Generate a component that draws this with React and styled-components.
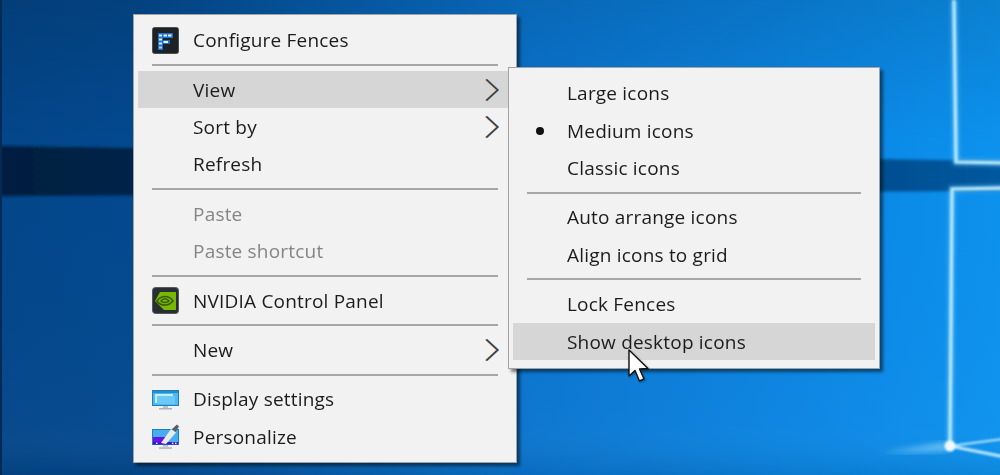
import React from 'react';
import styled, { createGlobalStyle } from 'styled-components';

const GlobalStyle = createGlobalStyle`
  html, body {
    margin: 0;
    padding: 0;
    width: 1000px;
    height: 475px;
    overflow: hidden;
    background: #0568b8;
  }
`;

const Desktop = styled.div`
  position: relative;
  width: 1000px;
  height: 475px;
  overflow: hidden;
  font-family: 'Open Sans', 'Noto Sans', sans-serif;
  filter: blur(0.35px);
`;

const Wallpaper = styled.svg`
  position: absolute;
  inset: 0;
  display: block;
`;

const Menu = styled.div`
  position: absolute;
  box-sizing: border-box;
  padding-top: 6.5px;
  background: #f2f2f2;
  border: 1px solid #a3a3a3;
  box-shadow: 3px 3px 3px rgba(0, 0, 0, 0.5);
  display: flex;
  flex-direction: column;
`;

const MainMenu = styled(Menu)`
  left: 133px;
  top: 14px;
  width: 384px;
  height: 449px;
`;

const SubMenu = styled(Menu)`
  left: 508px;
  top: 67px;
  width: 372px;
  height: 302px;
`;

const Row = styled.div`
  display: flex;
  align-items: center;
  height: 37.4px;
  flex: none;
  margin: 0 4px;
  padding-right: 13px;
  font-size: 19px;
  letter-spacing: 0.2px;
  color: ${props => (props.$disabled ? '#858585' : '#1c1c1c')};
  background: ${props => (props.$active ? '#d6d6d6' : 'transparent')};
`;

const IconSlot = styled.span`
  flex: none;
  width: 55px;
  box-sizing: border-box;
  padding-left: 14px;
  display: flex;
  align-items: center;
`;

const CheckSlot = styled.span`
  flex: none;
  width: 54px;
  box-sizing: border-box;
  padding-left: 23px;
  display: flex;
  align-items: center;
`;

const Bullet = styled.span`
  width: 8px;
  height: 8px;
  border-radius: 50%;
  background: #111;
`;

const Label = styled.span`
  flex: 1;
  white-space: nowrap;
`;

const Separator = styled.div`
  flex: none;
  height: 2px;
  margin: 5px 18px;
  background: #a6a6a6;
`;

const Chevron = () => (
  <svg width="14" height="24" viewBox="0 0 14 24" fill="none" strokeWidth="1.3">
    <polyline points="0.6,1.5 12,12 0.6,22.5" stroke="#d98a3c" />
    <polyline points="2,1.5 13.4,12 2,22.5" stroke="#3f8fd0" />
    <polyline points="1.3,1.5 12.7,12 1.3,22.5" stroke="#3a3a3a" />
  </svg>
);

const FencesIcon = () => (
  <svg width="27" height="27" viewBox="0 0 27 27">
    <rect x="0.5" y="0.5" width="26" height="26" rx="2" fill="#1d2226" stroke="#4a4f52" />
    <rect x="6" y="6" width="5" height="17" fill="#1f6fc8" />
    <rect x="11" y="6" width="10" height="5" fill="#1f6fc8" />
    <rect x="11" y="13" width="7" height="4" fill="#1f6fc8" />
    <rect x="7" y="7.5" width="3" height="2" fill="#d6ecfd" />
    <rect x="7" y="11.5" width="3" height="2" fill="#d6ecfd" />
    <rect x="7" y="15.5" width="3" height="2" fill="#d6ecfd" />
    <rect x="7" y="19.5" width="3" height="2" fill="#a9d4f7" />
    <rect x="11.5" y="7.5" width="3.5" height="2" fill="#e4f3fe" />
    <rect x="16" y="7.5" width="3.5" height="2" fill="#e4f3fe" />
    <rect x="11.5" y="14" width="4.5" height="2" fill="#e4f3fe" />
  </svg>
);

const NvidiaIcon = () => (
  <svg width="27" height="27" viewBox="0 0 27 27">
    <rect x="0.5" y="0.5" width="26" height="26" rx="3" fill="#2a2d33" stroke="#55585d" />
    <path d="M8 5 H24 V23 H12 L3 14 Z" fill="#76b900" />
    <path d="M5 14 C9 8 17 8 21 14 C17 19 9 20 5 14 Z" fill="none" stroke="#3c5c0a" strokeWidth="1.6" />
    <path d="M9 14 C11 11 15 11 17 14 C15 16 11 16 9 14 Z" fill="none" stroke="#3c5c0a" strokeWidth="1.4" />
  </svg>
);

const DisplayIcon = () => (
  <svg width="27" height="26" viewBox="0 -4 27 26">
    <rect x="0.5" y="0.5" width="26" height="15" fill="#4fb8f2" stroke="#1f7fb8" />
    <rect x="1" y="1" width="25" height="2" fill="#1f8fd0" />
    <rect x="3" y="4" width="18" height="9" fill="#c8ebfc" />
    <rect x="5" y="6" width="18" height="8" fill="#6cc8f6" />
    <rect x="11" y="16" width="5" height="2" fill="#b8c4cc" />
    <rect x="7" y="18" width="13" height="1.5" fill="#a8b4bc" />
  </svg>
);

const PersonalizeIcon = () => (
  <svg width="27" height="26" viewBox="0 0 27 26">
    <rect x="0.5" y="5.5" width="26" height="15" fill="#45aef0" stroke="#1f7fb8" />
    <rect x="1" y="13" width="13" height="6" fill="#6a12e8" />
    <rect x="1" y="18" width="25" height="2.5" fill="#3d16c8" />
    <rect x="4" y="18.6" width="1.5" height="1.3" fill="#fff" />
    <rect x="20" y="18.6" width="1.5" height="1.3" fill="#fff" />
    <rect x="23" y="18.6" width="1.5" height="1.3" fill="#fff" />
    <path d="M9 19 L19 5 L24 8.5 L14 20 Z" fill="#eaeaea" />
    <path d="M20 5 L25 0.5 L27 2.5 L23.5 8 Z" fill="#5b5f63" />
    <rect x="11" y="21" width="5" height="1.8" fill="#b8c4cc" />
    <rect x="7" y="23.3" width="13" height="1.5" fill="#a8b4bc" />
  </svg>
);

const Cursor = styled.svg`
  position: absolute;
  left: 627px;
  top: 348px;
  filter: drop-shadow(1px 1px 1px rgba(0, 0, 0, 0.3));
`;

const mainItems = [
  { label: 'Configure Fences', icon: <FencesIcon /> },
  { sep: true },
  { label: 'View', arrow: true, active: true },
  { label: 'Sort by', arrow: true },
  { label: 'Refresh' },
  { sep: true },
  { label: 'Paste', disabled: true },
  { label: 'Paste shortcut', disabled: true },
  { sep: true },
  { label: 'NVIDIA Control Panel', icon: <NvidiaIcon /> },
  { sep: true },
  { label: 'New', arrow: true },
  { sep: true },
  { label: 'Display settings', icon: <DisplayIcon /> },
  { label: 'Personalize', icon: <PersonalizeIcon /> },
];

const viewItems = [
  { label: 'Large icons' },
  { label: 'Medium icons', checked: true },
  { label: 'Classic icons' },
  { sep: true },
  { label: 'Auto arrange icons' },
  { label: 'Align icons to grid' },
  { sep: true },
  { label: 'Lock Fences' },
  { label: 'Show desktop icons', active: true },
];

const App = () => {
  return (
    <Desktop>
      <GlobalStyle />
      <Wallpaper width="1000" height="475" viewBox="0 0 1000 475">
        <defs>
          <linearGradient id="sky" x1="0" y1="0" x2="1" y2="0">
            <stop offset="0" stopColor="#03468a" />
            <stop offset="0.13" stopColor="#03498f" />
            <stop offset="0.52" stopColor="#0a74ce" />
            <stop offset="0.88" stopColor="#0b8ae8" />
            <stop offset="1" stopColor="#0c92ee" />
          </linearGradient>
          <linearGradient id="band" x1="0" y1="0" x2="1" y2="0">
            <stop offset="0" stopColor="#001e3e" />
            <stop offset="0.13" stopColor="#002349" />
            <stop offset="0.88" stopColor="#044f92" />
            <stop offset="1" stopColor="#05599f" />
          </linearGradient>
          <linearGradient id="shade" x1="0" y1="0" x2="0" y2="1">
            <stop offset="0" stopColor="#000" stopOpacity="0.12" />
            <stop offset="0.3" stopColor="#000" stopOpacity="0" />
            <stop offset="0.9" stopColor="#fff" stopOpacity="0.02" />
            <stop offset="1" stopColor="#000" stopOpacity="0.08" />
          </linearGradient>
          <filter id="soft">
            <feGaussianBlur stdDeviation="0.8" />
          </filter>
          <filter id="band-blur">
            <feGaussianBlur stdDeviation="1.6" />
          </filter>
          <filter id="softer">
            <feGaussianBlur stdDeviation="3" />
          </filter>
          <filter id="glow">
            <feGaussianBlur stdDeviation="2" />
          </filter>
        </defs>
        <rect width="1000" height="475" fill="url(#sky)" />
        <rect width="1000" height="475" fill="url(#shade)" />
        <polygon points="0,146 1010,161 1010,191 0,196" fill="url(#band)" filter="url(#band-blur)" />
        <rect x="0" y="0" width="2" height="475" fill="#012a55" />
        <g filter="url(#glow)" fill="none" stroke="#6fcbf8" strokeWidth="6" opacity="0.6">
          <path d="M954 0 L956 162 L1010 163" />
          <path d="M1010 188 L952 189 L950 446" />
        </g>
        <g filter="url(#soft)" fill="none" stroke="#b8e8fd" strokeWidth="3.2">
          <path d="M954 0 L956 162 L1010 163" />
          <path d="M1010 188 L952 189 L950 446" />
          <path d="M950 446 L1010 438" strokeWidth="2" />
          <path d="M950 446 L1010 458" strokeWidth="3" />
        </g>
        <path d="M880 453 L948 442 L948 451 Z" fill="#8fd8fb" opacity="0.7" filter="url(#softer)" />
        <circle cx="950" cy="446" r="5.5" fill="#eefaff" filter="url(#soft)" />
      </Wallpaper>

      <MainMenu>
        {mainItems.map((item, i) =>
          item.sep ? (
            <Separator key={i} />
          ) : (
            <Row key={i} $active={item.active} $disabled={item.disabled}>
              <IconSlot>{item.icon}</IconSlot>
              <Label>{item.label}</Label>
              {item.arrow && <Chevron />}
            </Row>
          )
        )}
      </MainMenu>

      <SubMenu>
        {viewItems.map((item, i) =>
          item.sep ? (
            <Separator key={i} />
          ) : (
            <Row key={i} $active={item.active}>
              <CheckSlot>{item.checked && <Bullet />}</CheckSlot>
              <Label>{item.label}</Label>
            </Row>
          )
        )}
      </SubMenu>

      <Cursor width="24" height="36" viewBox="0 0 24 36">
        <path
          d="M2 2 L2 28 L8 22.5 L12.5 33 L17 31 L12.5 21 L21 20.5 Z"
          fill="#fff"
          stroke="#111"
          strokeWidth="1.4"
          strokeLinejoin="round"
        />
      </Cursor>
    </Desktop>
  );
};

export default App;
